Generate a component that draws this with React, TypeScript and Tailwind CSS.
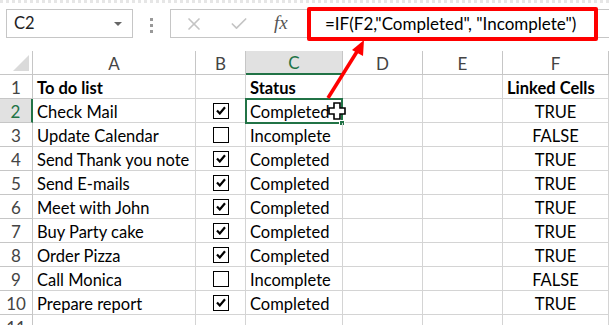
import { FiX, FiCheck } from "react-icons/fi"

type Row = { task: string; done: boolean }

const rows: Row[] = [
    { task: "Check Mail", done: true },
    { task: "Update Calendar", done: false },
    { task: "Send Thank you note", done: true },
    { task: "Send E-mails", done: true },
    { task: "Meet with John", done: true },
    { task: "Buy Party cake", done: true },
    { task: "Order Pizza", done: true },
    { task: "Call Monica", done: false },
    { task: "Prepare report", done: true },
]

const cell = "h-6 border-r border-b border-[#d4d4d4] flex items-center overflow-visible whitespace-nowrap"
const txt = `${cell} pt-[3px]`
const head = "h-6 pt-[2px] border-r border-b border-[#c6c6c6] flex items-center justify-center text-[#444] text-[17px]"

const Check = ({ on }: { on: boolean }) => (
    <div className="w-[16px] h-[16px] border-[1.5px] border-black bg-white flex items-center justify-center">
        {on && (
            <svg width="10" height="9" viewBox="0 0 10 9">
                <path d="M1 4.5 L3.8 7.5 L9 1.2" stroke="black" strokeWidth="2.2" fill="none" />
            </svg>
        )}
    </div>
)

const App = () => {
    return (
        <div className="relative w-[609px] h-[325px] overflow-hidden bg-white font-['Lato','Liberation_Sans',sans-serif] text-[16.5px] text-black">
            {/* formula bar */}
            <div className="h-[51px] pt-[9px] flex items-start border-t-[3px] border-dotted border-[#e6e6e6]">
                <div className="ml-[6px] w-[127px] h-[29px] -mt-[3px] border border-[#c6c6c6] flex items-center justify-between pl-[7px] pr-[10px] text-[#222]">
                    <span>C2</span>
                    <span className="w-0 h-0 border-l-[4px] border-r-[4px] border-t-[4px] border-l-transparent border-r-transparent border-t-[#666]" />
                </div>
                <div className="w-[37px] h-[26px] flex flex-col items-center justify-center gap-[3px]">
                    <span className="w-[3px] h-[3px] bg-[#999]" />
                    <span className="w-[3px] h-[3px] bg-[#999]" />
                    <span className="w-[3px] h-[3px] bg-[#999]" />
                </div>
                <div className="flex-1 h-[29px] -mt-[3px] border border-[#c6c6c6] border-r-0 flex items-center">
                    <FiX className="ml-[13px] text-[#c4c4c4] text-[20px]" />
                    <FiCheck className="ml-[25px] text-[#c4c4c4] text-[20px]" />
                    <span className="ml-[25px] font-['Liberation_Serif',serif] italic text-[19px] text-[#555]">fx</span>
                </div>
            </div>

            {/* red highlight of formula */}
            <div className="absolute left-[307px] top-[7px] w-[291px] h-[34px] border-[4px] border-[#ff0000] rounded-[2px] bg-white flex items-center pl-[14px] text-[17px]">
                =IF(F2,"Completed", "Incomplete")
            </div>

            {/* sheet */}
            <div className="grid grid-cols-[33px_163px_50px_97px_80px_80px_1fr]">
                <div className="h-6 border-r border-b border-[#c6c6c6] relative">
                    <div className="absolute right-[3px] bottom-[3px] w-0 h-0 border-l-[16px] border-b-[16px] border-l-transparent border-b-[#dadada]" />
                </div>
                <div className={head}>A</div>
                <div className={head}>B</div>
                <div className="h-6 pt-[2px] border-r border-[#c6c6c6] border-b-2 border-b-[#217346] bg-[#e1e1e1] flex items-center justify-center text-[#217346] text-[17px]">C</div>
                <div className={head}>D</div>
                <div className={head}>E</div>
                <div className={head}>F</div>

                <div className={head}>1</div>
                <div className={`${txt} pl-[4px] font-bold`}>To do list</div>
                <div className={cell} />
                <div className={`${txt} pl-[4px] font-bold`}>Status</div>
                <div className={cell} />
                <div className={cell} />
                <div className={`${txt} pl-[4px] font-bold`}>Linked Cells</div>

                {rows.map((r, i) => {
                    const selected = i === 0
                    return [
                        <div
                            key={`h${i}`}
                            className={selected
                                ? "h-6 pt-[2px] border-r-2 border-r-[#217346] border-b border-b-[#c6c6c6] bg-[#e1e1e1] flex items-center justify-center text-[#217346] text-[17px]"
                                : head}
                        >
                            {i + 2}
                        </div>,
                        <div key={`a${i}`} className={`${txt} pl-[4px]`}>{r.task}</div>,
                        <div key={`b${i}`} className={`${cell} justify-center`}><Check on={r.done} /></div>,
                        <div key={`c${i}`} className={`${txt} pl-[4px] relative`}>
                            {r.done ? "Completed" : "Incomplete"}
                            {selected && (
                                <div className="absolute -left-px -top-px w-[98px] h-[26px] border-2 border-[#217346]">
                                    <div className="absolute -right-[4px] -bottom-[4px] w-[6px] h-[6px] bg-[#217346] border border-white" />
                                </div>
                            )}
                        </div>,
                        <div key={`d${i}`} className={cell} />,
                        <div key={`e${i}`} className={cell} />,
                        <div key={`f${i}`} className={`${txt} justify-center`}>{r.done ? "TRUE" : "FALSE"}</div>,
                    ]
                })}

                <div className={head}>11</div>
                <div className={cell} />
                <div className={cell} />
                <div className={cell} />
                <div className={cell} />
                <div className={cell} />
                <div className={cell} />
            </div>

            {/* arrow from cell to formula */}
            <svg className="absolute left-0 top-0 pointer-events-none" width="609" height="325">
                <line x1="328" y1="98" x2="358" y2="50" stroke="#ff0000" strokeWidth="3.5" />
                <polygon points="364,40 352,50 363,56" fill="#ff0000" />
            </svg>

            {/* cursor */}
            <svg className="absolute left-[328px] top-[102px]" width="20" height="20" viewBox="0 0 20 20">
                <path d="M6 1 H12 V6 H17 V12 H12 V17 H6 V12 H1 V6 H6 Z" fill="white" stroke="black" strokeWidth="1.6" />
            </svg>
        </div>
    )
}

export default App
